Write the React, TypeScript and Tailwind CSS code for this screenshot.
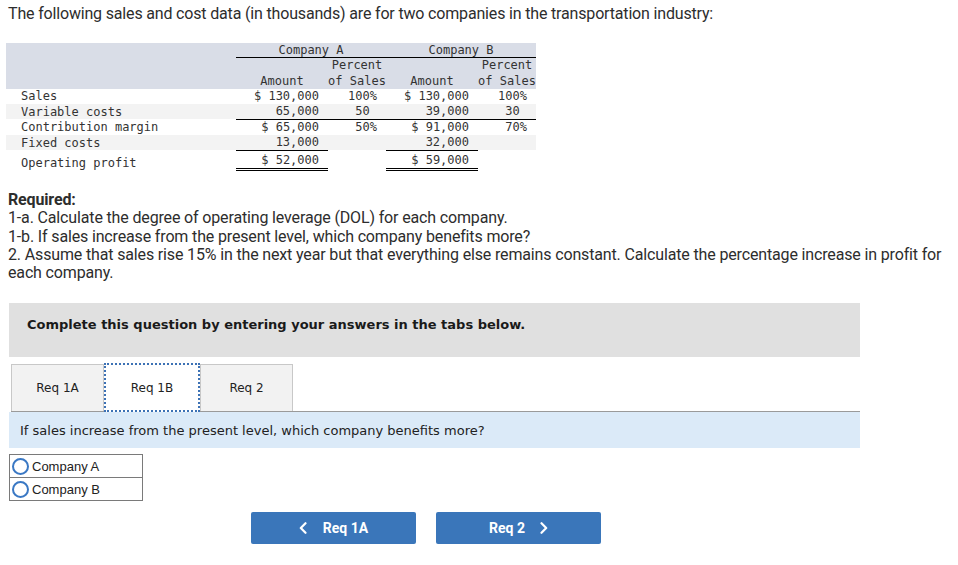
import React from 'react';

const mono = "font-['DejaVu_Sans_Mono','Liberation_Mono',monospace]";
const grid = 'grid grid-cols-[230px_92px_58px_92px_58px]';

const Pct = ({ v }: { v: string }) => (
  <>
    {v}
    <span className="invisible">%</span>
  </>
);

const DataRow = ({
  label,
  cells,
  shade,
  h = 'h-[15px]',
  under = [],
  dbl = [],
}: {
  label: string;
  cells: React.ReactNode[];
  shade?: boolean;
  h?: string;
  under?: number[];
  dbl?: number[];
}) => (
  <div className={`${grid} ${h} ${shade ? 'bg-[#f3f3f3]' : ''}`}>
    <div className="pl-[15px] flex items-end leading-[15px]">{label}</div>
    {cells.map((c, i) => (
      <div
        key={i}
        className={`flex items-end justify-end leading-[15px] pr-[9px] ${
          under.includes(i) ? 'border-b border-black' : ''
        } ${dbl.includes(i) ? 'border-b-[3px] border-double border-black' : ''}`}
      >
        {c}
      </div>
    ))}
  </div>
);

const Chevron = ({ dir }: { dir: 'l' | 'r' }) => (
  <svg width="8" height="12" viewBox="0 0 8 12" className="block">
    <path
      d={dir === 'l' ? 'M6.5 1.2 L1.8 6 L6.5 10.8' : 'M1.5 1.2 L6.2 6 L1.5 10.8'}
      fill="none"
      stroke="white"
      strokeWidth="2.2"
      strokeLinecap="round"
      strokeLinejoin="round"
    />
  </svg>
);

export default function App() {
  return (
    <div className="w-[958px] h-[565px] bg-white text-[#2d2d2d] overflow-hidden">
      <p className="ml-[8px] pt-[5px] text-[16px] leading-[18px] font-['Roboto',sans-serif] tracking-[-0.17px]">
        The following sales and cost data (in thousands) are for two companies in the transportation industry:
      </p>

      <div className={`mt-[20px] ml-[6px] w-[530px] text-[12px] ${mono} text-[#333]`}>
        <div className="bg-[#d9dde7]">
          <div className={`${grid} h-[15px] leading-[14px]`}>
            <div />
            <div className="col-span-2 text-center border-b border-black">Company A</div>
            <div className="col-span-2 text-center border-b border-black">Company B</div>
          </div>
          <div className={`${grid} h-[15px] leading-[15px]`}>
            <div />
            <div />
            <div className="text-center">Percent</div>
            <div />
            <div className="text-center">Percent</div>
          </div>
          <div className={`${grid} h-[16px] leading-[16px]`}>
            <div />
            <div className="text-center">Amount</div>
            <div className="text-center">of Sales</div>
            <div className="text-center">Amount</div>
            <div className="text-center">of Sales</div>
          </div>
        </div>
        <DataRow label="Sales" cells={['$ 130,000', '100%', '$ 130,000', '100%']} />
        <DataRow
          label="Variable costs"
          shade
          cells={['65,000', <Pct v="50" />, '39,000', <Pct v="30" />]}
          under={[0, 1, 2, 3]}
        />
        <DataRow label="Contribution margin" h="h-[16px]" cells={['$ 65,000', '50%', '$ 91,000', '70%']} />
        <DataRow label="Fixed costs" shade cells={['13,000', '', '32,000', '']} under={[0, 2]} />
        <DataRow label="Operating profit" h="h-[25px] pb-[4px]" cells={['$ 52,000', '', '$ 59,000', '']} dbl={[0, 2]} />
      </div>

      <div className="mt-[16px] ml-[8px] text-[16px] leading-[18.3px] font-['Roboto',sans-serif] tracking-[-0.15px]">
        <div className="font-bold">Required:</div>
        <div>1-a. Calculate the degree of operating leverage (DOL) for each company.</div>
        <div>1-b. If sales increase from the present level, which company benefits more?</div>
        <div>
          2. Assume that sales rise 15% in the next year but that everything else remains constant. Calculate the
          percentage increase in profit for
          <br />
          each company.
        </div>
      </div>

      <div className="mt-[21px] ml-[9px] w-[851px] h-[54px] bg-[#e0e0e0] pt-[14px] pl-[18px]">
        <div className="text-[13px] leading-[16px] font-bold font-['DejaVu_Sans',sans-serif] text-[#1a1a1a]">
          Complete this question by entering your answers in the tabs below.
        </div>
      </div>

      <div className="mt-[7px] ml-[11px] flex h-[47px] items-start text-[12px] font-['DejaVu_Sans',sans-serif] text-[#222]">
        <div className="w-[93px] h-[47px] bg-[#f2f2f2] border border-b-0 border-[#c8c8c8] flex items-center justify-center">
          Req 1A
        </div>
        <div className="relative z-10 w-[96px] h-[49px] -mt-[1px] bg-white border-2 border-dotted border-[#3d72b5] flex items-center justify-center">
          Req 1B
        </div>
        <div className="w-[93px] h-[47px] bg-[#f2f2f2] border border-b-0 border-[#c8c8c8] flex items-center justify-center">
          Req 2
        </div>
      </div>
      <div className="ml-[11px] w-[849px] h-px bg-[#9a9a9a]" />
      <div className="ml-[9px] w-[851px] h-[36px] bg-[#dbeaf8] flex items-center pl-[11px] text-[13px] font-['DejaVu_Sans',sans-serif] text-[#222]">
        If sales increase from the present level, which company benefits more?
      </div>

      <div className="mt-[6px] ml-[9px] w-[134px] border border-[#7a7a7a] text-[13px] font-['Liberation_Sans',sans-serif] text-[#222]">
        {['Company A', 'Company B'].map((c, i) => (
          <div key={c} className={`h-[22px] flex items-center pl-[2px] ${i === 0 ? 'border-b border-[#7a7a7a] h-[23px]' : ''}`}>
            <span className="w-[17px] h-[17px] rounded-full border-[2.5px] border-[#3a78c4] bg-white mr-[3px]" />
            {c}
          </div>
        ))}
      </div>

      <div className="mt-[11px] ml-[251px] flex gap-[20px] text-[14px] font-bold font-['Roboto',sans-serif] text-white">
        <button className="w-[165px] h-[32px] rounded-[2px] bg-[#3a76ba] flex items-center justify-center gap-[16px]">
          <Chevron dir="l" />
          <span>Req 1A</span>
        </button>
        <button className="w-[165px] h-[32px] rounded-[2px] bg-[#3a76ba] flex items-center justify-center gap-[15px]">
          <span>Req 2</span>
          <Chevron dir="r" />
        </button>
      </div>
    </div>
  );
}
